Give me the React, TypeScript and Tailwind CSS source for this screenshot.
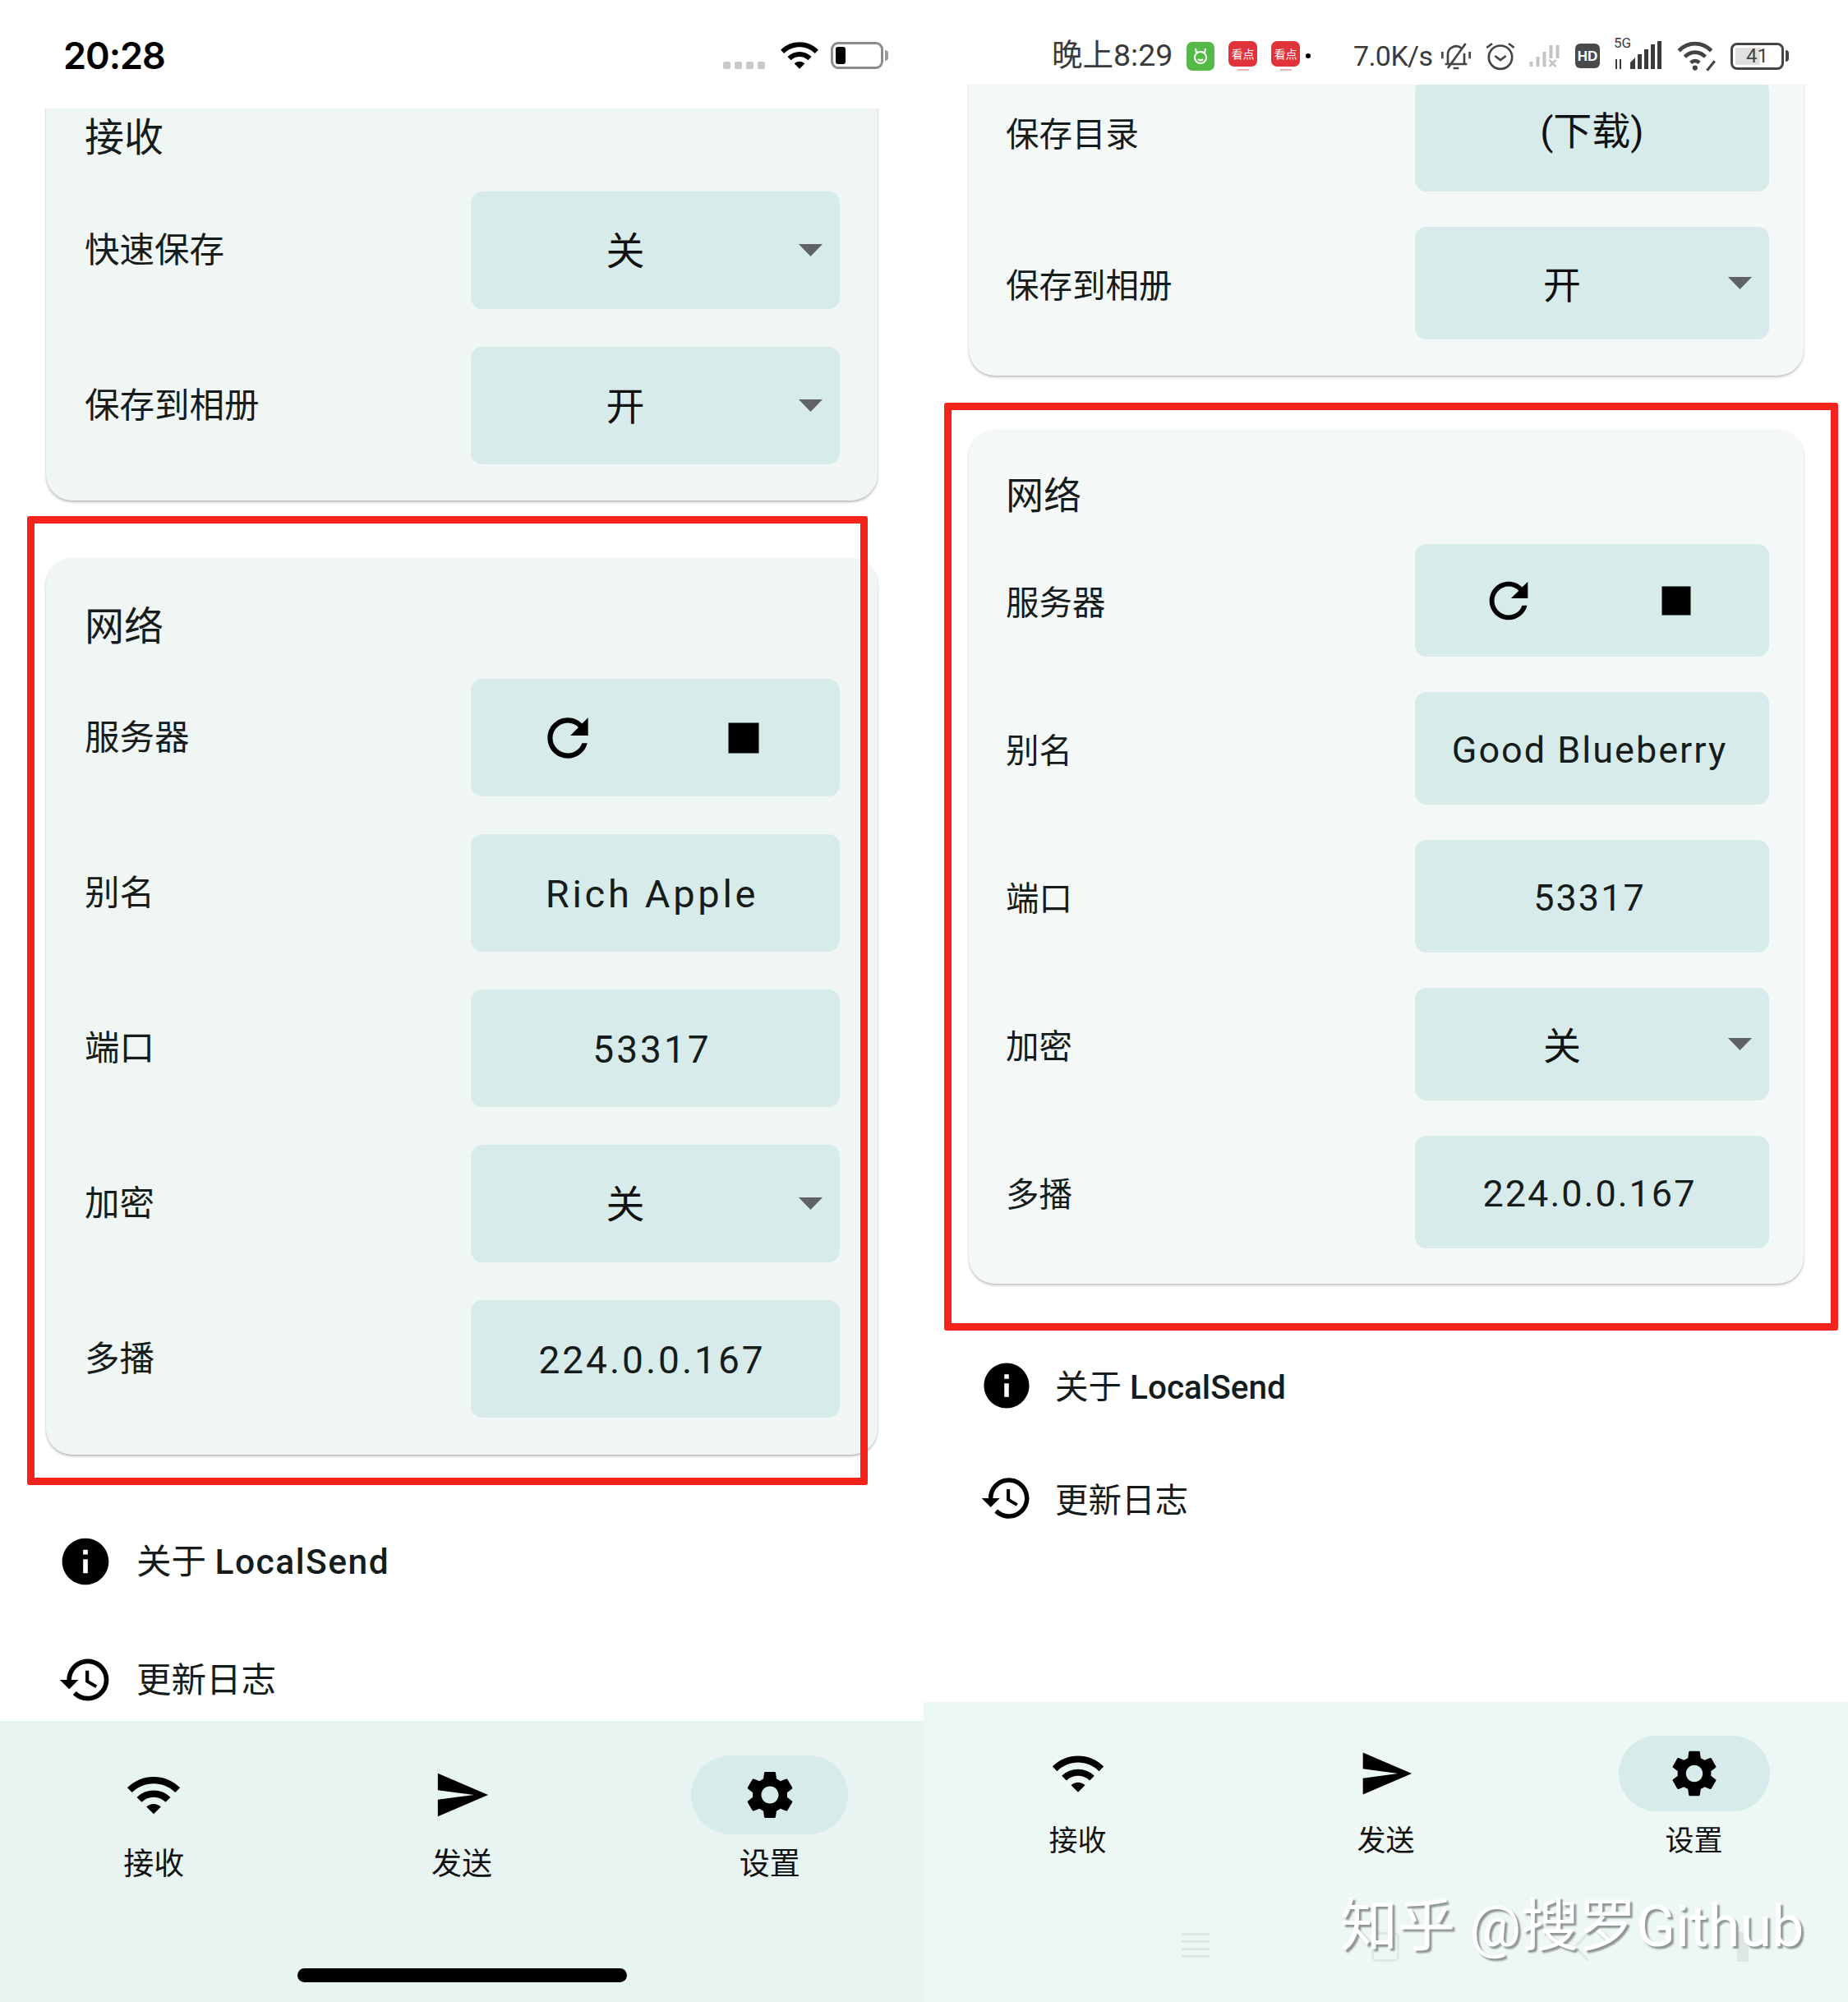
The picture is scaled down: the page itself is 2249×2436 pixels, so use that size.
import React from "react";

const P = {
  wifi: "M1 9l2 2c4.97-4.97 13.03-4.97 18 0l2-2C16.93 2.93 7.08 2.93 1 9zm8 8l3 3 3-3c-1.65-1.66-4.34-1.66-6 0zm-4-4l2 2c2.76-2.76 7.24-2.76 10 0l2-2C15.14 9.14 8.87 9.14 5 13z",
  send: "M2.01 21L23 12 2.01 3 2 10l15 2-15 2z",
  gear: "M19.14 12.94c.04-.3.06-.61.06-.94 0-.32-.02-.64-.07-.94l2.03-1.58c.18-.14.23-.41.12-.61l-1.92-3.32c-.12-.22-.37-.29-.59-.22l-2.39.96c-.5-.38-1.03-.7-1.62-.94l-.36-2.54c-.04-.24-.24-.41-.48-.41h-3.84c-.24 0-.43.17-.47.41l-.36 2.54c-.59.24-1.13.57-1.62.94l-2.39-.96c-.22-.08-.47 0-.59.22L2.74 8.87c-.12.21-.08.47.12.61l2.03 1.58c-.05.3-.09.63-.09.94s.02.64.07.94l-2.03 1.58c-.18.14-.23.41-.12.61l1.92 3.32c.12.22.37.29.59.22l2.39-.96c.5.38 1.03.7 1.62.94l.36 2.54c.05.24.24.41.48.41h3.84c.24 0 .44-.17.47-.41l.36-2.54c.59-.24 1.13-.56 1.62-.94l2.39.96c.22.08.47 0 .59-.22l1.92-3.32c.12-.22.07-.47-.12-.61l-2.01-1.58zM12 15.6c-1.98 0-3.6-1.62-3.6-3.6s1.62-3.6 3.6-3.6 3.6 1.62 3.6 3.6-1.62 3.6-3.6 3.6z",
  refresh: "M17.65 6.35C16.2 4.9 14.21 4 12 4c-4.42 0-7.99 3.58-7.99 8s3.57 8 7.99 8c3.73 0 6.84-2.55 7.73-6h-2.08c-.82 2.33-3.04 4-5.65 4-3.31 0-6-2.69-6-6s2.69-6 6-6c1.66 0 3.14.69 4.22 1.78L13 11h7V4l-2.35 2.35z",
  stop: "M6 6h12v12H6z",
  info: "M12 2C6.48 2 2 6.48 2 12s4.48 10 10 10 10-4.48 10-10S17.52 2 12 2zm1 15h-2v-6h2v6zm0-8h-2V7h2v2z",
  history: "M13 3c-4.97 0-9 4.03-9 9H1l3.89 3.89.07.14L9 12H6c0-3.87 3.13-7 7-7s7 3.13 7 7-3.13 7-7 7c-1.93 0-3.68-.79-4.94-2.06l-1.42 1.42C8.27 19.99 10.51 21 13 21c4.97 0 9-4.03 9-9s-4.03-9-9-9zm-1 5v5l4.28 2.54.72-1.21-3.5-2.08V8H12z",
};

function Ic({ d, className }: { d: string; className: string }) {
  return (
    <svg viewBox="0 0 24 24" fill="currentColor" className={className}>
      <path d={d} />
    </svg>
  );
}

function Caret() {
  return (
    <svg viewBox="0 0 29 15" className="w-[29px] h-[15px] shrink-0 ml-[23px] mr-[21px]">
      <path d="M0 0h29L14.5 15z" fill="#5f6368" />
    </svg>
  );
}

type RowProps = {
  label: string;
  rowCls: string;
  ctlCls: string;
  labelCls: string;
  children: React.ReactNode;
};

function Row({ label, rowCls, ctlCls, labelCls, children }: RowProps) {
  return (
    <div className={"flex items-center justify-between " + rowCls}>
      <span className={labelCls}>{label}</span>
      <div className={"flex items-center bg-[#d7ecea] rounded-[14px] h-full " + ctlCls}>{children}</div>
    </div>
  );
}

function NavItem({ d, label, active, pillCls, labelCls, iconCls }: { d: string; label: string; active?: boolean; pillCls: string; labelCls: string; iconCls: string }) {
  return (
    <div className="flex-1 flex flex-col items-center">
      <div className={"flex items-center justify-center rounded-full " + pillCls + (active ? " bg-[#d7ecea]" : "")}>
        <Ic d={d} className={iconCls} />
      </div>
      <span className={labelCls}>{label}</span>
    </div>
  );
}

function LeftPhone() {
  const row = "h-[143px] mb-[46px] last:mb-0";
  const ctl = "w-[449px]";
  const lab = "text-[42.5px] leading-none text-[#161c1b] pt-[2px]";
  const val = "flex-1 text-center text-[46px] leading-none tracking-[3px] text-[#161c1b] pr-[8px] pt-[2px]";
  const sel = "flex-1 text-center text-[47px] leading-none text-[#111] pt-[2px]";
  const title = "text-[48px] leading-[68px] text-[#161c1b] h-[68px] pt-[2px]";
  const pill = "w-[191px] h-[96px]";
  const navLab = "mt-[12px] text-[37px] leading-[50px] text-[#111]";
  return (
    <div className="relative w-[1124px] h-full flex flex-col bg-white overflow-hidden">
      <div className="relative z-10 h-[132px] shrink-0 bg-white flex items-start pl-[77px] pr-[43px] pt-[44px]">
        <span className="font-['Inter',sans-serif] font-semibold text-[45px] tracking-[-1px] leading-[48px] text-black">20:28</span>
        <div className="ml-auto flex items-center h-[34px] mt-[6px]">
          <div className="flex gap-[5px] mt-[24px] mr-[17px]">
            <i className="block w-[9px] h-[9px] rounded-[2px] bg-[#c9c9c9]" />
            <i className="block w-[9px] h-[9px] rounded-[2px] bg-[#c9c9c9]" />
            <i className="block w-[9px] h-[9px] rounded-[2px] bg-[#c9c9c9]" />
            <i className="block w-[9px] h-[9px] rounded-[2px] bg-[#c9c9c9]" />
          </div>
          <Ic d={P.wifi} className="w-[50px] h-[50px] text-black mr-[13px]" />
          <div className="flex items-center">
            <div className="w-[64px] h-[33px] rounded-[9px] border-[3px] border-[#8c8c8c] p-[3px]">
              <div className="w-[12px] h-full rounded-[3px] bg-black" />
            </div>
            <div className="w-[4px] h-[13px] ml-[2px] rounded-r-full bg-[#9a9a9a]" />
          </div>
        </div>
      </div>
      <div className="flex-1 min-h-0 overflow-hidden">
        <div className="mx-[56px] w-[1012px] -mt-[40px] pt-[40px] pb-[44px] pl-[47px] pr-[46px] bg-[#f0f6f4] rounded-[32px] shadow-[0_2px_3px_rgba(0,0,0,0.28)]">
          <div className={title + " mb-[33px]"}>接收</div>
          <Row label="快速保存" rowCls={row} ctlCls={ctl} labelCls={lab}><span className={sel}>关</span><Caret /></Row>
          <Row label="保存到相册" rowCls={row} ctlCls={ctl} labelCls={lab}><span className={sel}>开</span><Caret /></Row>
        </div>
        <div className="mx-[56px] w-[1012px] mt-[70px] pt-[48px] pb-[45px] pl-[47px] pr-[46px] bg-[#f0f6f4] rounded-[32px] shadow-[0_2px_3px_rgba(0,0,0,0.28)]">
          <div className={title + " mb-[31px]"}>网络</div>
          <Row label="服务器" rowCls={row} ctlCls={ctl + " justify-center gap-[140px] text-black"} labelCls={lab}>
            <Ic d={P.refresh} className="w-[74px] h-[74px]" />
            <Ic d={P.stop} className="w-[74px] h-[74px]" />
          </Row>
          <Row label="别名" rowCls={row} ctlCls={ctl} labelCls={lab}><span className="flex-1 text-center text-[47px] leading-none tracking-[3.7px] text-[#161c1b] pr-[8px] pt-[2px]">Rich Apple</span></Row>
          <Row label="端口" rowCls={row} ctlCls={ctl} labelCls={lab}><span className={val}>53317</span></Row>
          <Row label="加密" rowCls={row} ctlCls={ctl} labelCls={lab}><span className={sel}>关</span><Caret /></Row>
          <Row label="多播" rowCls={row} ctlCls={ctl} labelCls={lab}><span className={val}>224.0.0.167</span></Row>
        </div>
        <div className="mt-[58px] pl-[70px] flex items-center h-[144px] gap-[28px]">
          <span className="w-[68px] flex justify-center"><Ic d={P.info} className="w-[72px] h-[72px]" /></span>
          <span className="text-[42.5px] text-[#161c1b] leading-none pt-[2px]">关于 <span className="font-medium tracking-[1.5px]">LocalSend</span></span>
        </div>
        <div className="pl-[70px] flex items-center h-[144px] gap-[28px]">
          <span className="w-[68px] flex justify-center"><Ic d={P.history} className="w-[72px] h-[72px]" /></span>
          <span className="text-[42.5px] text-[#161c1b] leading-none pt-[2px]">更新日志</span>
        </div>
      </div>
      <div className="relative h-[342px] shrink-0 bg-[#e8f4f1] pt-[42px] flex">
        <NavItem d={P.wifi} label="接收" pillCls={pill} labelCls={navLab} iconCls="w-[70px] h-[70px]" />
        <NavItem d={P.send} label="发送" pillCls={pill} labelCls={navLab} iconCls="w-[70px] h-[70px]" />
        <NavItem d={P.gear} label="设置" active pillCls={pill} labelCls={navLab} iconCls="w-[70px] h-[70px]" />
        <div className="absolute left-[362px] top-[301px] w-[401px] h-[17px] rounded-full bg-black" />
      </div>
      <div className="absolute left-[33px] top-[628px] w-[1023px] h-[1179px] border-[9px] border-[#f5231b] rounded-[3px] pointer-events-none" />
    </div>
  );
}

function RedApp({ ml }: { ml: string }) {
  return (
    <div className={"flex flex-col items-center gap-[3px] w-[35px] " + ml}>
      <div className="w-[35px] h-[31px] rounded-[7px] bg-[#e0343a] flex items-center justify-center text-white text-[14px] leading-none whitespace-nowrap">看点</div>
      <div className="w-[14px] h-[2px] bg-[#eeb4b4]" />
    </div>
  );
}

function RightStatus() {
  return (
    <div className="relative z-10 h-[103px] shrink-0 bg-white flex items-center pl-[156px] pt-[33px] text-[#3a3a3a]">
      <span className="text-[37.5px] leading-none w-[146px] whitespace-nowrap">晚上8:29</span>
      <div className="ml-[18px] w-[34px] h-[35px] rounded-[7px] bg-[#55b947] flex items-center justify-center">
        <svg viewBox="0 0 24 24" className="w-[24px] h-[24px]" fill="none" stroke="#fff" strokeWidth="2"><circle cx="12" cy="14" r="7" /><path d="M7 8L6 3M17 8l1-5M9 16c2 2 4 2 6 0" /></svg>
      </div>
      <RedApp ml="ml-[17px]" />
      <RedApp ml="ml-[17px]" />
      <i className="ml-[7px] block w-[6px] h-[6px] rounded-full bg-black" />
      <span className="ml-[52px] text-[34px] tracking-[-0.6px] leading-none w-[98px] whitespace-nowrap">7.0K/s</span>
      <svg viewBox="0 0 24 24" className="ml-[7px] w-[40px] h-[40px]" fill="none" stroke="#444" strokeWidth="1.6">
        <path d="M6 18V11a6 6 0 0 1 10-4.5M18 10v8M4 18h16M10 21h4M19 3L6 21M2 9v5M22 9v5" />
      </svg>
      <svg viewBox="0 0 24 24" className="ml-[14px] w-[40px] h-[40px]" fill="none" stroke="#444" strokeWidth="1.6">
        <circle cx="12" cy="13" r="8.5" /><path d="M8 12l4 3 4-3M2 6l4-3M22 6l-4-3" />
      </svg>
      <svg viewBox="0 0 40 30" className="ml-[13px] w-[41px] h-[30px]" fill="#c4c4c4">
        <path d="M2 22h4v6H2zM10 16h4v12h-4zM18 10h4v18h-4zM26 2h4v16h-4z" />
        <path d="M26 20l8 8M34 20l-8 8" stroke="#c4c4c4" strokeWidth="2.5" />
        <path d="M34 2h4v16h-4z" />
      </svg>
      <div className="ml-[17px] w-[30px] h-[30px] rounded-[6px] bg-[#4a4a4a] text-white text-[17px] font-bold leading-none flex items-center justify-center font-['Liberation_Sans',sans-serif]">HD</div>
      <div className="relative ml-[17px] w-[60px] h-[36px]">
        <span className="absolute left-0 -top-[6px] text-[17px] leading-none">5G</span>
        <svg viewBox="0 0 60 36" className="w-[60px] h-[36px]" fill="#3a3a3a">
          <path d="M2 22h2v12H2zM7 22h2v12H7zM20 26l6-6v14h-6zM29 16h5v18h-5zM37 10h5v24h-5zM45 4h5v30h-5zM53 0h5v34h-5z" />
        </svg>
      </div>
      <svg viewBox="0 0 50 38" className="ml-[16px] w-[52px] h-[40px]" fill="none" stroke="#444" strokeWidth="4.5">
        <path d="M3 13c11-11 27-11 38 0M10 20c7-7 17-7 24 0M17 27c3-3 7-3 10 0" />
        <circle cx="22" cy="33" r="3" fill="#444" stroke="none" />
        <path d="M36 36l9-11" strokeWidth="3" />
      </svg>
      <div className="ml-[14px] flex items-center">
        <div className="w-[65px] h-[33px] rounded-[8px] border-[3px] border-[#444] p-[3px] relative">
          <div className="w-[30px] h-full bg-[#e0e0e0]" />
          <span className="absolute inset-0 flex items-center justify-center text-[24px] leading-none text-[#444]">41</span>
        </div>
        <div className="w-[4px] h-[14px] ml-[2px] rounded-r-full bg-[#444]" />
      </div>
    </div>
  );
}

function RightPhone() {
  const row = "h-[137px] mb-[43px] last:mb-0";
  const ctl = "w-[431px]";
  const lab = "text-[40.5px] leading-none text-[#161c1b] pt-[7px]";
  const val = "flex-1 text-center text-[45px] leading-none tracking-[2px] text-[#161c1b] pr-[6px] pt-[4px]";
  const sel = "flex-1 text-center text-[46px] leading-none text-[#111] pt-[4px]";
  const card = "mx-[55px] w-[1016px] pl-[45px] pr-[42px] bg-[#f4f9f8] rounded-[32px] shadow-[0_2px_3px_rgba(0,0,0,0.25)]";
  const pill = "w-[184px] h-[92px]";
  const navLab = "mt-[13px] text-[35px] leading-[48px] text-[#111]";
  return (
    <div className="relative w-[1125px] h-full flex flex-col bg-white overflow-hidden">
      <RightStatus />
      <div className="flex-1 min-h-0 overflow-hidden">
        <div className={card + " -mt-[47px] pt-[40px] pb-[44px]"}>
          <Row label="保存目录" rowCls={row} ctlCls={ctl} labelCls="text-[40.5px] leading-none text-[#161c1b]">
            <span className="flex-1 text-center text-[47px] leading-none text-[#111] pb-[10px]">(下载)</span>
          </Row>
          <Row label="保存到相册" rowCls={row} ctlCls={ctl} labelCls={lab}><span className={sel}>开</span><Caret /></Row>
        </div>
        <div className={card + " mt-[66px] pt-[44px] pb-[43px]"}>
          <div className="text-[46px] leading-[68px] h-[68px] text-[#161c1b] mb-[27px] pt-[2px]">网络</div>
          <Row label="服务器" rowCls={row} ctlCls={ctl + " justify-center gap-[134px] text-black"} labelCls={lab}>
            <Ic d={P.refresh} className="w-[70px] h-[70px]" />
            <Ic d={P.stop} className="w-[70px] h-[70px]" />
          </Row>
          <Row label="别名" rowCls={row} ctlCls={ctl} labelCls={lab}><span className={val}>Good Blueberry</span></Row>
          <Row label="端口" rowCls={row} ctlCls={ctl} labelCls={lab}><span className={val}>53317</span></Row>
          <Row label="加密" rowCls={row} ctlCls={ctl} labelCls={lab}><span className={sel}>关</span><Caret /></Row>
          <Row label="多播" rowCls={row} ctlCls={ctl} labelCls={lab}><span className={val}>224.0.0.167</span></Row>
        </div>
        <div className="mt-[55px] pl-[68px] flex items-center h-[137px] gap-[26px]">
          <span className="w-[66px] flex justify-center"><Ic d={P.info} className="w-[70px] h-[70px]" /></span>
          <span className="text-[40.5px] text-[#161c1b] leading-none pt-[6px]">关于 <span className="font-medium">LocalSend</span></span>
        </div>
        <div className="pl-[68px] flex items-center h-[137px] gap-[26px]">
          <span className="w-[66px] flex justify-center"><Ic d={P.history} className="w-[70px] h-[70px]" /></span>
          <span className="text-[40.5px] text-[#161c1b] leading-none pt-[8px]">更新日志</span>
        </div>
      </div>
      <div className="relative h-[365px] shrink-0 bg-[#edf7f4] pt-[41px] flex">
        <NavItem d={P.wifi} label="接收" pillCls={pill} labelCls={navLab} iconCls="w-[68px] h-[68px]" />
        <NavItem d={P.send} label="发送" pillCls={pill} labelCls={navLab} iconCls="w-[68px] h-[68px]" />
        <NavItem d={P.gear} label="设置" active pillCls={pill} labelCls={navLab} iconCls="w-[68px] h-[68px]" />
        <div className="absolute left-[314px] top-[281px] w-[34px] flex flex-col gap-[6px]">
          <i className="block h-[3px] bg-[#dfe7e5]" /><i className="block h-[3px] bg-[#dfe7e5]" /><i className="block h-[3px] bg-[#dfe7e5]" /><i className="block h-[3px] bg-[#dfe7e5]" />
        </div>
        <div className="absolute left-[545px] top-[280px] w-[34px] h-[36px] rounded-[6px] border-[3px] border-[#dfe7e5]" />
        <svg viewBox="0 0 20 36" className="absolute left-[790px] top-[280px] w-[20px] h-[36px]" fill="none" stroke="#dfe7e5" strokeWidth="3"><path d="M18 2L3 18l15 16" /></svg>
        <div className="absolute left-[990px] top-[280px] w-[14px] h-[36px] bg-[#dfe7e5]" />
        <div className="absolute left-[507px] top-[233px] text-[70px] leading-[80px] text-white whitespace-nowrap [text-shadow:3px_3px_2px_#8f9695]">
          知乎 @搜罗Github
        </div>
      </div>
      <div className="absolute left-[25px] top-[490px] w-[1088px] h-[1129px] border-[9px] border-[#f5231b] rounded-[3px] pointer-events-none" />
    </div>
  );
}

export default function App() {
  return (
    <div className="flex w-[2249px] h-[2436px] overflow-hidden bg-white font-['Roboto','Noto_Sans_CJK_SC',sans-serif]">
      <LeftPhone />
      <RightPhone />
    </div>
  );
}
